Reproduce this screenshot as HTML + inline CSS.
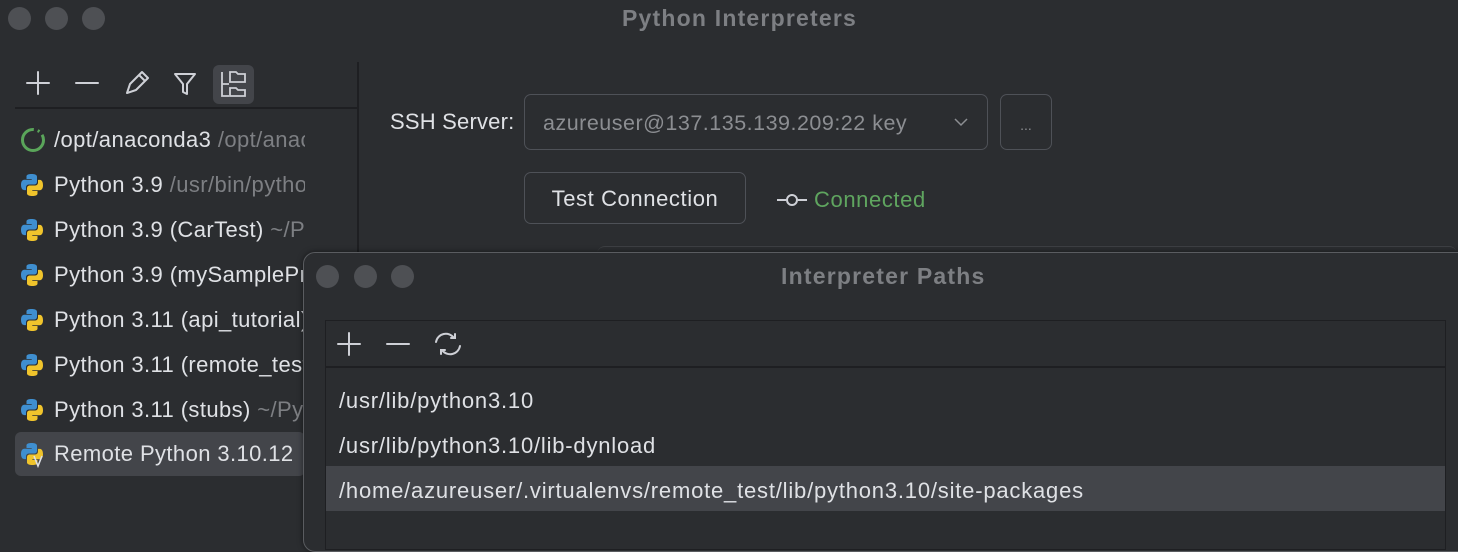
<!DOCTYPE html>
<html><head><meta charset="utf-8"><style>
*{margin:0;padding:0;box-sizing:border-box}
body{width:1458px;height:539px;background:#2b2d30;font-family:"Liberation Sans",sans-serif;color:#dfe1e5;position:relative;overflow:hidden}
.abs{position:absolute}
.dot{position:absolute;width:23px;height:23px;border-radius:50%;background:#4e5054}
.title{position:absolute;font-weight:bold;font-size:23px;letter-spacing:1.2px;color:#7d7f83}
.row{position:absolute;left:15px;width:290px;height:44px;font-size:22px;letter-spacing:.4px;line-height:44px;padding-left:39px;white-space:nowrap;overflow:hidden}
.row .g{color:#7d7f83}
.row svg{position:absolute;left:5px;top:10px}
.p{position:absolute;left:339px;font-size:22px;letter-spacing:.8px;white-space:nowrap}
.t{font-size:22px;letter-spacing:.6px}
</style></head><body>
<div class="dot" style="left:8px;top:7px"></div>
<div class="dot" style="left:45px;top:7px"></div>
<div class="dot" style="left:82px;top:7px"></div>
<div class="title" style="left:622px;top:5px">Python Interpreters</div>

<svg class="abs" style="left:15px;top:62px" width="345" height="50">
<g stroke="#ced0d6" stroke-width="2" fill="none" stroke-linecap="round" stroke-linejoin="round">
<path d="M23 10v22M12 21h22"/>
<path d="M61 21h22"/>
<path d="M112 31l3-9 12-12 6 6-12 12z M124 13l6 6"/>
<path d="M160 12h20l-8 10v10l-4-2v-8z"/>
</g>
<rect x="198" y="3" width="41" height="39" rx="6" fill="#43454a"/>
<g stroke="#ced0d6" stroke-width="1.8" fill="none">
<path d="M207 10v24h7 M207 22h7"/>
<path d="M215 10h6l2 2h7v8h-15z M215 26h6l2 2h7v6h-15z"/>
</g>
<line x1="0" y1="46" x2="343" y2="46" stroke="#1e1f22" stroke-width="2"/>
</svg>
<div class="abs" style="left:357px;top:62px;width:2px;height:477px;background:#1e1f22"></div>

<svg width="0" height="0" style="position:absolute"><defs>
<g id="py"><path d="M11.5 1C6 1 6.5 3.5 6.5 3.5V6h5.2v.8H4.5S1 6.4 1 11.8s3 5.3 3 5.3h2v-2.6s-.1-3 3-3h5.2s2.8 0 2.8-2.8V3.8S17.5 1 11.5 1z" fill="#3f8fd0"/>
<path d="M12.5 23c5.5 0 5-2.5 5-2.5V18h-5.2v-.8h7.2S23 17.6 23 12.2s-3-5.3-3-5.3h-2v2.6s.1 3-3 3H9.8S7 12.5 7 15.3v4.9S6.5 23 12.5 23z" fill="#f0c42c"/></g></defs></svg>
<div class="row" style="top:118px"><svg width="26" height="26" style="left:5px;top:9px"><circle cx="13" cy="13" r="10.5" stroke="#5aa55a" stroke-width="3" fill="none" stroke-dasharray="50 4 2 4"/></svg>/opt/anaconda3 <span class="g">/opt/anaconda3</span></div>
<div class="row" style="top:163px"><svg width="24" height="24"><use href="#py"/></svg>Python 3.9 <span class="g">/usr/bin/python3</span></div>
<div class="row" style="top:208px"><svg width="24" height="24"><use href="#py"/></svg>Python 3.9 (CarTest) <span class="g">~/PycharmProjects</span></div>
<div class="row" style="top:253px"><svg width="24" height="24"><use href="#py"/></svg>Python 3.9 (mySampleProject)</div>
<div class="row" style="top:298px"><svg width="24" height="24"><use href="#py"/></svg>Python 3.11 (api_tutorial)</div>
<div class="row" style="top:343px"><svg width="24" height="24"><use href="#py"/></svg>Python 3.11 (remote_test)</div>
<div class="row" style="top:388px"><svg width="24" height="24"><use href="#py"/></svg>Python 3.11 (stubs) <span class="g">~/PycharmProjects</span></div>
<div class="row" style="top:432px;background:#43454a;border-radius:6px"><svg width="28" height="26"><use href="#py"/><path d="M14 14l4 10 4-10" stroke="#dfe1e5" stroke-width="1.6" fill="none"/></svg>Remote Python 3.10.12</div>

<div class="abs t" style="left:390px;top:109px;letter-spacing:.2px">SSH Server:</div>
<div class="abs" style="left:524px;top:94px;width:464px;height:56px;border:1.5px solid #4e5157;border-radius:7px;font-size:21.5px;letter-spacing:.5px;color:#8c8e92;padding:16px 0 0 18px">azureuser@137.135.139.209:22 key
<svg class="abs" style="left:428px;top:22px" width="16" height="10"><path d="M2 2l6 6 6-6" stroke="#8c8e92" stroke-width="1.5" fill="none"/></svg></div>
<div class="abs" style="left:1000px;top:94px;width:52px;height:56px;border:1.5px solid #4e5157;border-radius:7px;color:#8c8e92;text-align:center;font-size:14px;line-height:60px">...</div>
<div class="abs t" style="left:524px;top:172px;width:222px;height:52px;border:1.5px solid #4e5157;border-radius:7px;text-align:center;line-height:52px;color:#dfe1e5">Test Connection</div>
<svg class="abs" style="left:776px;top:190px" width="32" height="20"><path d="M1 10h9M22 10h9" stroke="#ced0d6" stroke-width="2"/><circle cx="16" cy="10" r="5" stroke="#ced0d6" stroke-width="2" fill="none"/></svg>
<div class="abs t" style="left:814px;top:187px;color:#5fa55f">Connected</div>
<div class="abs" style="left:597px;top:246px;width:860px;height:20px;border-top:1.5px solid #3d3f43;border-radius:8px 8px 0 0"></div>

<div class="abs" style="left:303px;top:252px;width:1170px;height:300px;background:#2b2d30;border:1.5px solid #5a5c60;border-radius:12px;box-shadow:0 0 6px rgba(0,0,0,.5)"></div>
<div class="dot" style="left:316px;top:265px"></div>
<div class="dot" style="left:354px;top:265px"></div>
<div class="dot" style="left:391px;top:265px"></div>
<div class="title" style="left:781px;top:263px">Interpreter Paths</div>
<div class="abs" style="left:325px;top:320px;width:1121px;height:230px;border:1.5px solid #1e1f22;background:#2b2d30"></div>
<div class="abs" style="left:326px;top:366px;width:1119px;height:2px;background:#1e1f22"></div>
<svg class="abs" style="left:330px;top:328px" width="140" height="34">
<g stroke="#ced0d6" stroke-width="2" fill="none" stroke-linecap="round">
<path d="M19 5v22M8 16h22"/><path d="M57 16h22"/>
<path d="M106 14a10 10 0 0 1 18-4 M130 18a10 10 0 0 1-18 4"/>
<path d="M121 10h4v-4 M115 22h-4v4"/>
</g></svg>
<div class="p" style="top:388px">/usr/lib/python3.10</div>
<div class="p" style="top:433px">/usr/lib/python3.10/lib-dynload</div>
<div class="abs" style="left:326px;top:466px;width:1119px;height:45px;background:#43454a"></div>
<div class="p" style="top:478px">/home/azureuser/.virtualenvs/remote_test/lib/python3.10/site-packages</div>
</body></html>
